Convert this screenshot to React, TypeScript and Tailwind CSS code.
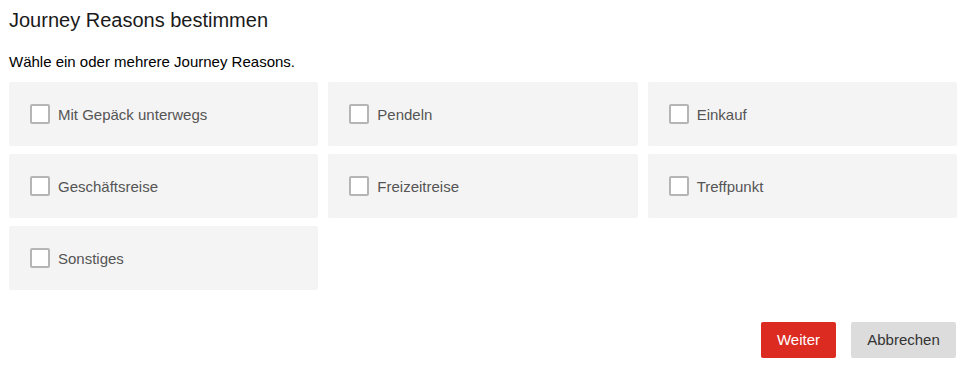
import React, { useState } from 'react';

const reasons = [
  'Mit Gepäck unterwegs',
  'Pendeln',
  'Einkauf',
  'Geschäftsreise',
  'Freizeitreise',
  'Treffpunkt',
  'Sonstiges',
];

export default function App() {
  const [checked, setChecked] = useState<Record<string, boolean>>({});

  return (
    <div className="min-h-screen bg-white pl-[9px] pr-[11px] pt-[8px] font-['Liberation_Sans',Arial,sans-serif]">
      <h1 className="text-[20px] leading-[24px] text-[#1a1a1a]">Journey Reasons bestimmen</h1>
      <p className="mt-[21px] text-[15px] leading-[18px] text-black">
        Wähle ein oder mehrere Journey Reasons.
      </p>
      <div className="mt-[11px] grid grid-cols-3 gap-x-[10px] gap-y-[8px]">
        {reasons.map((r) => (
          <label
            key={r}
            className="flex h-[64px] cursor-pointer items-center gap-[8px] rounded-[2px] bg-[#f4f4f4] pl-[21px]"
          >
            <input
              type="checkbox"
              className="peer sr-only"
              checked={!!checked[r]}
              onChange={() => setChecked((c) => ({ ...c, [r]: !c[r] }))}
            />
            <span className="flex h-[20px] w-[20px] items-center justify-center rounded-[2px] border-2 border-[#b5b5b5] bg-white">
              {checked[r] && (
                <svg viewBox="0 0 16 16" className="h-[14px] w-[14px]">
                  <path d="M3 8l3.5 3.5L13 5" fill="none" stroke="#dc2b21" strokeWidth="2" />
                </svg>
              )}
            </span>
            <span className="pt-[3px] text-[15px] text-[#555]">{r}</span>
          </label>
        ))}
      </div>
      <div className="mt-[32px] flex justify-end gap-[15px] pr-[1px]">
        <button className="h-[36px] w-[75px] rounded-[2px] bg-[#dc2b21] text-[15px] text-white">
          Weiter
        </button>
        <button className="h-[36px] w-[105px] rounded-[2px] bg-[#dcdcdc] text-[15px] text-[#333]">
          Abbrechen
        </button>
      </div>
    </div>
  );
}
